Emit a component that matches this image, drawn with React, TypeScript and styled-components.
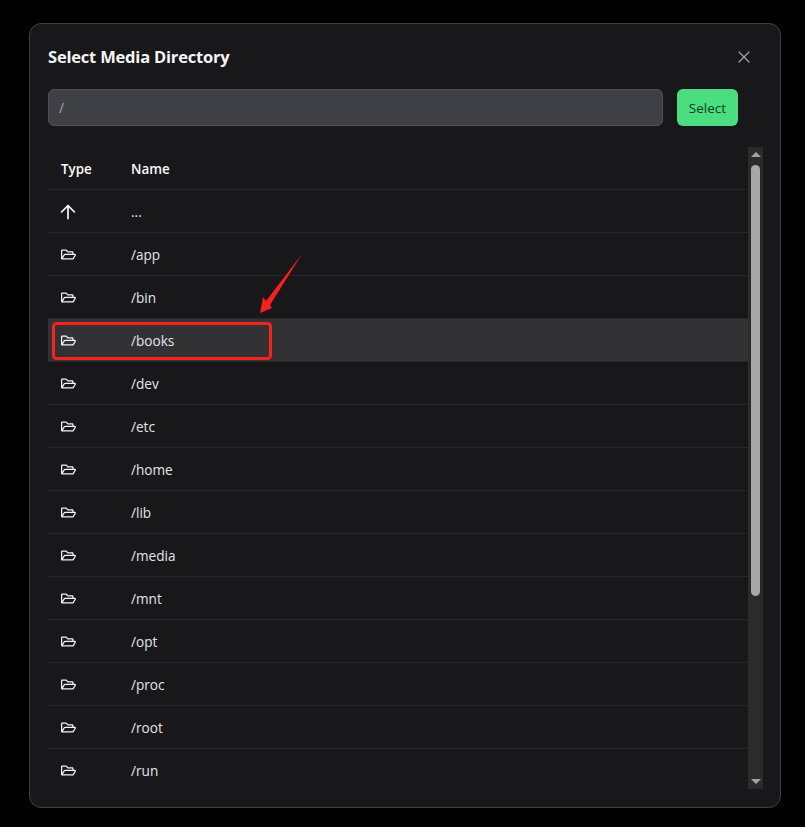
import React from "react";
import styled, { createGlobalStyle } from "styled-components";
import { ArrowUp, X } from "lucide-react";
import { FaRegFolderOpen } from "react-icons/fa";

const Global = createGlobalStyle`
  html, body { margin: 0; padding: 0; background: #000; height: 100%; }
  body { font-family: "Open Sans", "Noto Sans", sans-serif; overflow: hidden; }
`;

const Page = styled.div`
  width: 805px;
  height: 827px;
  padding: 23px 24px 19px 29px;
  box-sizing: border-box;
`;

const Modal = styled.div`
  position: relative;
  width: 752px;
  height: 785px;
  box-sizing: border-box;
  padding: 0 17px 18px 18px;
  background: #18181b;
  border: 1px solid #3f3f46;
  border-radius: 12px;
  display: flex;
  flex-direction: column;
`;

const Header = styled.div`
  height: 65px;
  padding-top: 1px;
  box-sizing: border-box;
  display: flex;
  align-items: center;
  justify-content: space-between;
`;

const Title = styled.h2`
  margin: 0;
  font-size: 16.5px;
  line-height: 28px;
  font-weight: 700;
  letter-spacing: -0.2px;
  color: #f4f4f5;
`;

const CloseButton = styled.button`
  position: absolute;
  top: 23px;
  right: 26px;
  width: 20px;
  height: 20px;
  padding: 0;
  border: 0;
  background: none;
  color: #a1a1aa;
  display: flex;
  align-items: center;
  justify-content: center;
`;

const PathRow = styled.div`
  display: flex;
  gap: 14px;
  height: 37px;
  padding-right: 25px;
  margin-bottom: 21px;
`;

const PathInput = styled.input`
  flex: 1;
  min-width: 0;
  box-sizing: border-box;
  padding: 0 10px;
  background: #3f3f46;
  border: 1px solid #52525b;
  border-radius: 6px;
  color: #a1a1aa;
  font: 400 14px "Open Sans", sans-serif;
  outline: none;
`;

const SelectButton = styled.button`
  width: 61px;
  border: 0;
  border-radius: 6px;
  background: #4ade80;
  color: #0f3d20;
  font: 500 13.5px "Open Sans", sans-serif;
  padding: 0;
`;

const TableArea = styled.div`
  flex: 1;
  min-height: 0;
  display: flex;
`;

const TableClip = styled.div`
  flex: 1;
  min-width: 0;
  overflow: hidden;
`;

const Row = styled.div<{ $selected?: boolean; $head?: boolean }>`
  display: grid;
  grid-template-columns: 70px 1fr;
  align-items: center;
  height: 43px;
  box-sizing: border-box;
  padding: 1px 0 0 13px;
  border-bottom: 1px solid #27272a;
  background: ${(p) => (p.$selected ? "#323235" : "transparent")};
  color: ${(p) => (p.$head ? "#fafafa" : "#e4e4e7")};
  font-size: ${(p) => (p.$head ? "13.4px" : "13.6px")};
  font-weight: ${(p) => (p.$head ? 600 : 400)};
`;

const IconCell = styled.div`
  display: flex;
  align-items: center;
  color: #f4f4f5;
`;

const UpIcon = styled(ArrowUp)`
  margin-left: -4px;
`;

const ScrollTrack = styled.div`
  width: 15px;
  flex: none;
  background: #2b2b2b;
  display: flex;
  flex-direction: column;
  align-items: center;
  justify-content: space-between;
  padding: 5px 0 5px;
  box-sizing: border-box;
`;

const ScrollArrow = styled.svg`
  width: 10px;
  height: 5px;
  fill: #a3a3a3;
  flex: none;
`;

const ScrollThumb = styled.div`
  width: 9px;
  height: 431px;
  margin-top: 8px;
  border-radius: 5px;
  background: #a8a8a8;
  flex: none;
`;

const ScrollSpacer = styled.div`
  flex: 1;
`;

const Annotation = styled.svg`
  position: absolute;
  left: 0;
  top: 0;
  width: 750px;
  height: 783px;
  pointer-events: none;
  fill: none;
`;

const dirs = ["/app", "/bin", "/books", "/dev", "/etc", "/home", "/lib", "/media", "/mnt", "/opt", "/proc", "/root", "/run"];

export default function App() {
  return (
    <>
      <Global />
      <Page>
        <Modal>
          <Header>
            <Title>Select Media Directory</Title>
          </Header>
          <CloseButton aria-label="Close">
            <X size={20} strokeWidth={1.5} />
          </CloseButton>
          <PathRow>
            <PathInput defaultValue="/" />
            <SelectButton>Select</SelectButton>
          </PathRow>
          <TableArea>
            <TableClip>
              <Row $head>
                <div>Type</div>
                <div>Name</div>
              </Row>
              <Row>
                <IconCell>
                  <UpIcon size={22} strokeWidth={1.9} />
                </IconCell>
                <div>...</div>
              </Row>
              {dirs.map((d) => (
                <Row key={d} $selected={d === "/books"}>
                  <IconCell>
                    <FaRegFolderOpen size={15} />
                  </IconCell>
                  <div>{d}</div>
                </Row>
              ))}
            </TableClip>
            <ScrollTrack>
              <ScrollArrow viewBox="0 0 10 5"><polygon points="5,0 10,5 0,5" /></ScrollArrow>
              <ScrollThumb />
              <ScrollSpacer />
              <ScrollArrow viewBox="0 0 10 5"><polygon points="0,0 10,0 5,5" /></ScrollArrow>
            </ScrollTrack>
          </TableArea>
          <Annotation viewBox="0 0 750 783">
            <rect x="23.5" y="299.5" width="217" height="35" rx="3" stroke="#f8201c" strokeWidth="3" />
            <polygon points="272,230 240,281 242,284 230,289 233,273 236,277" fill="#f8201c" />
          </Annotation>
        </Modal>
      </Page>
    </>
  );
}
